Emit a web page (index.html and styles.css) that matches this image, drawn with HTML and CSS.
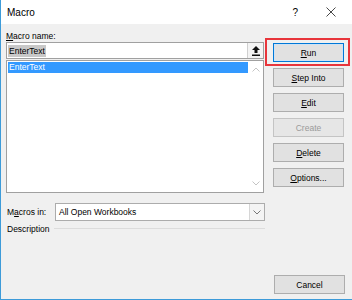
FILE: index.html
```html
<!DOCTYPE html>
<html lang="en">
<head>
  <meta charset="UTF-8" />
  <title>Macro</title>
  <link rel="stylesheet" href="styles.css">
</head>
<body>
  <div class="window">
    <div class="titlebar">
      <span class="title">Macro</span>
      <span class="help">?</span>
      <svg class="close" width="10" height="10" viewBox="0 0 10 10">
        <path d="M0.5 0.5 L9.5 9.5 M9.5 0.5 L0.5 9.5" stroke="#333" stroke-width="0.9" fill="none"/>
      </svg>
    </div>

    <div class="body">
      <div class="main">
        <div class="left">
          <div class="label"><u>M</u>acro name:</div>
          <div class="namebox">
            <span class="sel-text">EnterText</span>
            <span class="pick">
              <svg width="8" height="10" viewBox="0 0 8 10">
                <path d="M4 0 L8 4 L5.5 4 L5.5 7 L2.5 7 L2.5 4 L0 4 Z" fill="#111"/>
                <rect x="0" y="8.5" width="8" height="1.5" fill="#111"/>
              </svg>
            </span>
          </div>
          <div class="listbox">
            <div class="items">
              <div class="item selected">EnterText</div>
            </div>
            <div class="scrollbar">
              <svg width="8" height="5" viewBox="0 0 8 5"><path d="M0.5 4.5 L4 1 L7.5 4.5" stroke="#c4c4c4" fill="none"/></svg>
              <svg width="8" height="5" viewBox="0 0 8 5"><path d="M0.5 0.5 L4 4 L7.5 0.5" stroke="#c4c4c4" fill="none"/></svg>
            </div>
          </div>
        </div>

        <div class="buttons">
          <div class="run-wrap">
            <button class="btn default"><u>R</u>un</button>
            <div class="highlight"></div>
          </div>
          <button class="btn"><u>S</u>tep Into</button>
          <button class="btn"><u>E</u>dit</button>
          <button class="btn disabled">Create</button>
          <button class="btn"><u>D</u>elete</button>
          <button class="btn"><u>O</u>ptions...</button>
        </div>
      </div>

      <div class="macros-in">
        <span class="label">M<u>a</u>cros in:</span>
        <div class="select">
          <span class="value">All Open Workbooks</span>
          <span class="drop">
            <svg width="8" height="5" viewBox="0 0 8 5"><path d="M0.5 0.5 L4 4 L7.5 0.5" stroke="#777" fill="none"/></svg>
          </span>
        </div>
      </div>

      <div class="desc">
        <span class="label">Description</span>
        <span class="rule"></span>
      </div>

      <div class="footer">
        <button class="btn">Cancel</button>
      </div>
    </div>
  </div>
</body>
</html>
```

FILE: styles.css
```css
* {
  box-sizing: border-box;
}

body {
  margin: 0;
  font-family: "Segoe UI", "Liberation Sans", Arial, sans-serif;
  font-size: 8.5px;
  color: #000;
  background: #fff;
}

u {
  text-decoration: underline;
  text-underline-offset: 1px;
}

.window {
  width: 352px;
  height: 300px;
  display: flex;
  flex-direction: column;
  background: #f0f0f0;
  border-left: 1px solid #3d9bd9;
  border-bottom: 1px solid #3d9bd9;
}

.titlebar {
  height: 24px;
  background: #fff;
  display: flex;
  align-items: center;
  padding-left: 6px;
}

.title {
  font-size: 10px;
  flex: 1;
}

.help {
  font-size: 10px;
  margin-right: 28px;
}

.close {
  margin-right: 16px;
}

.body {
  flex: 1;
  display: flex;
  flex-direction: column;
  padding: 6px 0 5px 5px;
}

.main {
  display: flex;
  gap: 9px;
}

.left {
  width: 258px;
}

.label {
  line-height: 12px;
}

.namebox {
  height: 17px;
  background: #fff;
  border: 1px solid #a0a0a0;
  display: flex;
  align-items: center;
  padding-left: 1px;
}

.sel-text {
  background: #c8c8c8;
  line-height: 12px;
  padding: 0 1px;
  flex: none;
}

.pick {
  margin-left: auto;
  width: 16px;
  height: 15px;
  border-left: 1px solid #d0d0d0;
  background: #f4f4f4;
  display: flex;
  align-items: center;
  justify-content: center;
}

.listbox {
  margin-top: 1px;
  height: 133px;
  background: #fff;
  border: 1px solid #a0a0a0;
  display: flex;
}

.items {
  flex: 1;
  padding: 1px 0 0 1px;
}

.item {
  height: 11px;
  line-height: 11px;
  padding-left: 1px;
}

.item.selected {
  background: #3399ff;
  color: #fff;
}

.scrollbar {
  width: 15px;
  display: flex;
  flex-direction: column;
  justify-content: space-between;
  align-items: center;
  padding: 6px 0 6px;
}

.buttons {
  width: 71px;
  padding-top: 13px;
  display: flex;
  flex-direction: column;
  gap: 6px;
}

.btn {
  height: 19px;
  width: 71px;
  font-family: inherit;
  font-size: 8.5px;
  color: #000;
  background: #e1e1e1;
  border: 1px solid #adadad;
  padding: 0;
}

.btn.default {
  border-color: #0078d7;
  box-shadow: inset 0 0 0 1px #cfe3f5;
}

.btn.disabled {
  color: #9a9a9a;
  background: #e6e6e6;
  border-color: #c4c4c4;
}

.run-wrap {
  position: relative;
  height: 19px;
}

.highlight {
  position: absolute;
  top: -5px;
  left: -8px;
  right: -6px;
  bottom: -4px;
  border: 2px solid #e8353b;
}

.macros-in {
  width: 259px;
  margin-top: 10px;
  display: flex;
  align-items: center;
  padding-left: 1px;
}

.macros-in .label {
  width: 48px;
}

.select {
  flex: 1;
  height: 18px;
  background: #fff;
  border: 1px solid #acacac;
  display: flex;
  align-items: center;
  padding-left: 3px;
}

.select .value {
  flex: 1;
}

.drop {
  width: 15px;
  height: 16px;
  border-left: 1px solid #d6d6d6;
  background: #f4f4f4;
  display: flex;
  align-items: center;
  justify-content: center;
}

.desc {
  width: 259px;
  display: flex;
  align-items: center;
  gap: 4px;
  margin-top: 2px;
  padding-left: 1px;
}

.rule {
  flex: 1;
  border-top: 1px solid #dcdcdc;
  margin-top: -1px;
}

.footer {
  margin-top: auto;
  display: flex;
  justify-content: flex-end;
  padding-right: 7px;
}
```
